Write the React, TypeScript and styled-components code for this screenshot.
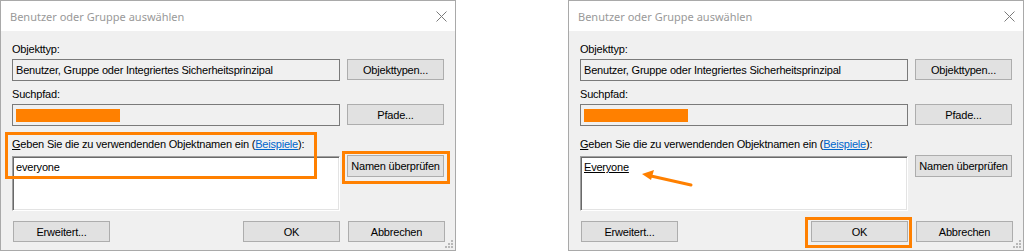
import React from "react";
import styled, { createGlobalStyle } from "styled-components";

const GlobalStyle = createGlobalStyle`
  html, body { margin: 0; padding: 0; background: #ffffff; }
  #root { width: 1024px; height: 251px; overflow: hidden; }
`;

const ORANGE = "#ff8000";
const UI_FONT = `"Liberation Sans", Arial, sans-serif`;

const Page = styled.div`
  display: flex;
  gap: 112px;
  width: 1024px;
  height: 251px;
`;

const Dialog = styled.div`
  position: relative;
  box-sizing: border-box;
  width: 456px;
  height: 251px;
  border: 1px solid #a9a9a9;
  background: #f0f0f0;
  display: flex;
  flex-direction: column;
  font-family: ${UI_FONT};
  font-size: 11px;
  letter-spacing: -0.2px;
  color: #000;
`;

const TitleBar = styled.div`
  height: 30px;
  flex: none;
  background: #ffffff;
  display: flex;
  align-items: center;
  justify-content: space-between;
  padding: 0 8px 0 9px;
  font-family: "Noto Sans", "Open Sans", sans-serif;
  font-size: 11px;
  letter-spacing: 0;
  color: #999999;
`;

const CloseIcon = styled.svg`
  width: 11px;
  height: 11px;
`;

const Body = styled.div`
  display: flex;
  flex-direction: column;
  padding: 12px 10px 0 11px;
`;

const Label = styled.div<{ $mt?: number }>`
  height: 13px;
  line-height: 13px;
  margin-top: ${(p) => p.$mt ?? 0}px;
  white-space: nowrap;
`;

const Row = styled.div<{ $mt?: number }>`
  display: grid;
  grid-template-columns: 328px 97px;
  column-gap: 7px;
  align-items: start;
  margin-top: ${(p) => p.$mt ?? 0}px;
`;

const ReadField = styled.div`
  box-sizing: border-box;
  height: 22px;
  border: 1px solid #7a7a7a;
  background: #f0f0f0;
  display: flex;
  align-items: center;
  padding: 0 3px;
  white-space: nowrap;
`;

const Redacted = styled.div`
  width: 104px;
  height: 13px;
  background: ${ORANGE};
`;

const Button = styled.div<{ $h?: number }>`
  box-sizing: border-box;
  height: ${(p) => p.$h ?? 21}px;
  background: #e1e1e1;
  border: 1px solid #adadad;
  display: flex;
  align-items: center;
  justify-content: center;
  white-space: nowrap;
`;

const NamesBox = styled.div`
  box-sizing: border-box;
  height: 55px;
  margin-top: 1px;
  background: #ffffff;
  border-top: 1px solid #a0a0a0;
  border-left: 1px solid #a0a0a0;
  border-right: 1px solid #ffffff;
  border-bottom: 1px solid #ffffff;
  box-shadow: inset 1px 1px 0 #696969, inset -1px -1px 0 #e3e3e3;
  padding: 4px 3px;
  line-height: 13px;
`;

const Resolved = styled.span`
  text-decoration: underline;
`;

const Accel = styled.span`
  text-decoration: underline;
`;

const Link = styled.span`
  color: #0066cc;
  text-decoration: underline;
`;

const Footer = styled.div`
  display: grid;
  grid-template-columns: 97px 1fr 97px 97px;
  column-gap: 8px;
  margin-top: 10px;
  padding-left: 1px;
`;

const Highlight = styled.div<{ $x: number; $y: number; $w: number; $h: number }>`
  position: absolute;
  left: ${(p) => p.$x}px;
  top: ${(p) => p.$y}px;
  width: ${(p) => p.$w}px;
  height: ${(p) => p.$h}px;
  box-sizing: border-box;
  border: 3px solid ${ORANGE};
  pointer-events: none;
`;

const Grip = styled.svg`
  position: absolute;
  right: 2px;
  bottom: 2px;
  width: 8px;
  height: 8px;
`;

const Arrow = styled.svg`
  position: absolute;
  left: 70px;
  top: 164px;
  width: 60px;
  height: 30px;
  overflow: visible;
`;

function Close() {
  return (
    <CloseIcon viewBox="0 0 11 11">
      <path d="M0.5 0.5 L10.5 10.5 M10.5 0.5 L0.5 10.5" stroke="#7a7a7a" strokeWidth="1" fill="none" />
    </CloseIcon>
  );
}

function ResizeGrip() {
  const dots = [
    [6, 0],
    [3, 3],
    [6, 3],
    [0, 6],
    [3, 6],
    [6, 6],
  ];
  return (
    <Grip viewBox="0 0 8 8">
      {dots.map(([x, y], i) => (
        <rect key={i} x={x} y={y} width="2" height="2" fill="#b8b8b8" />
      ))}
    </Grip>
  );
}

function SelectDialog({ resolved }: { resolved: boolean }) {
  return (
    <Dialog>
      <TitleBar>
        <span>Benutzer oder Gruppe auswählen</span>
        <Close />
      </TitleBar>
      <Body>
        <Label>Objekttyp:</Label>
        <Row $mt={3}>
          <ReadField>Benutzer, Gruppe oder Integriertes Sicherheitsprinzipal</ReadField>
          <Button>Objekttypen...</Button>
        </Row>
        <Label $mt={7}>Suchpfad:</Label>
        <Row $mt={3}>
          <ReadField>
            <Redacted />
          </ReadField>
          <Button>Pfade...</Button>
        </Row>
        <Label $mt={12}>
          <Accel>G</Accel>eben Sie die zu verwendenden Objektnamen ein (<Link>Beispiele</Link>):
        </Label>
        <Row $mt={4}>
          <NamesBox>{resolved ? <Resolved>Everyone</Resolved> : "everyone"}</NamesBox>
          <Button $h={22}>Namen überprüfen</Button>
        </Row>
        <Footer>
          <Button>Erweitert...</Button>
          <span />
          <Button>OK</Button>
          <Button>Abbrechen</Button>
        </Footer>
      </Body>
      <ResizeGrip />
      {resolved ? (
        <>
          <Highlight $x={236} $y={216} $w={107} $h={31} />
          <Arrow viewBox="0 0 60 30">
            <line x1="52" y1="20" x2="12" y2="11" stroke={ORANGE} strokeWidth="3" strokeLinecap="round" />
            <polygon points="3,9 15,5 12,15" fill={ORANGE} />
          </Arrow>
        </>
      ) : (
        <>
          <Highlight $x={4} $y={131} $w={312} $h={47} />
          <Highlight $x={341} $y={150} $w={108} $h={33} />
        </>
      )}
    </Dialog>
  );
}

export default function App() {
  return (
    <>
      <GlobalStyle />
      <Page>
        <SelectDialog resolved={false} />
        <SelectDialog resolved />
      </Page>
    </>
  );
}
